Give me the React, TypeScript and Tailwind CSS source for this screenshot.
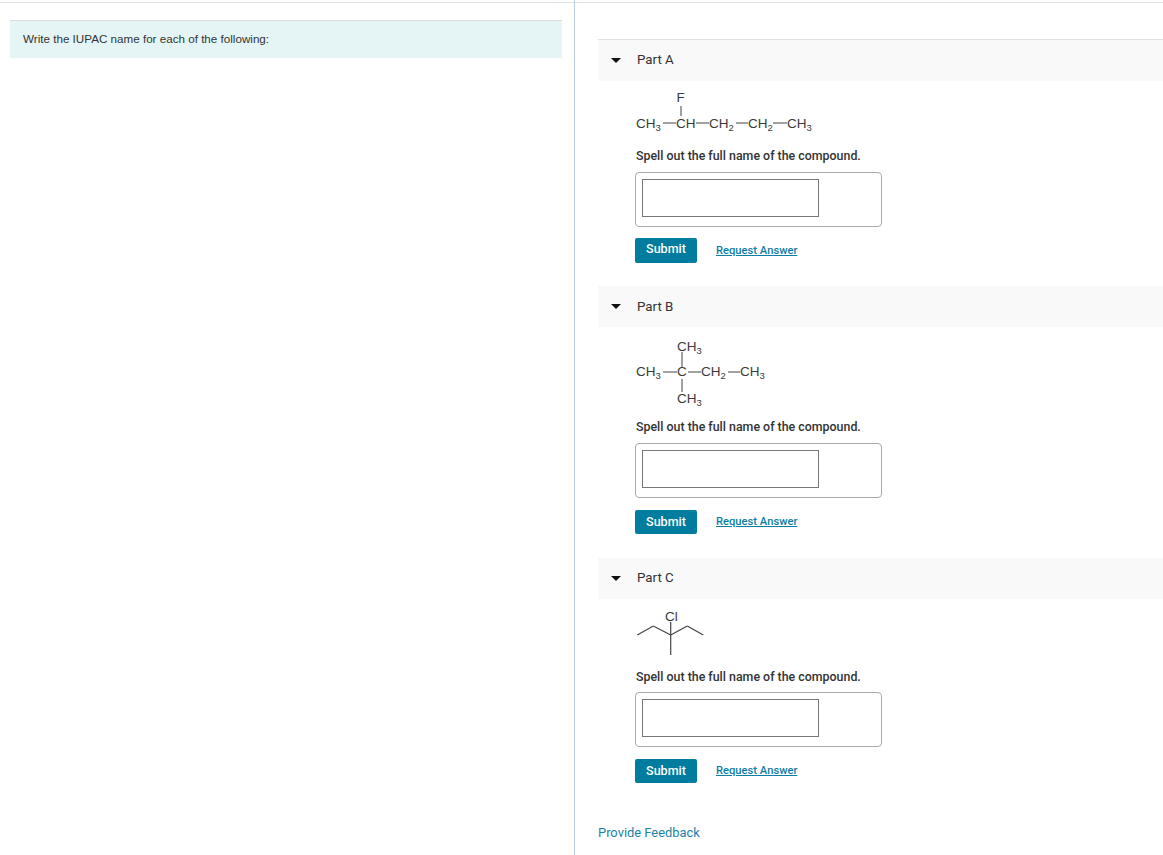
type Atom = { x: number; y: number; label: string; sub?: string }

const textFill = '#3a3a3a'

function Formula({ atoms, bonds, viewBox, className, bondWidth = 1 }: { atoms: Atom[]; bonds: number[][]; viewBox: string; className: string; bondWidth?: number }) {
  return (
    <svg viewBox={viewBox} className={className} fill={textFill} fontFamily="'Liberation Sans', Arial, sans-serif" fontSize="13.5">
      {bonds.map(([x1, y1, x2, y2], i) => (
        <line key={i} x1={x1} y1={y1} x2={x2} y2={y2} stroke="#444" strokeWidth={bondWidth} />
      ))}
      {atoms.map((a, i) => (
        <text key={i} x={a.x} y={a.y}>
          {a.label}
          {a.sub && (
            <tspan fontSize="9.5" dy="3">
              {a.sub}
            </tspan>
          )}
        </text>
      ))}
    </svg>
  )
}

function PartA() {
  return (
    <Formula
      viewBox="635 81 260 65"
      className="block h-[65px] w-[260px]"
      bonds={[
        [681, 106, 681, 116],
        [663, 123, 676, 123],
        [696, 123, 709, 123],
        [736, 123, 748, 123],
        [773, 123, 787, 123],
      ]}
      atoms={[
        { x: 676.5, y: 102, label: 'F' },
        { x: 636, y: 128, label: 'CH', sub: '3' },
        { x: 676, y: 128, label: 'CH' },
        { x: 709, y: 128, label: 'CH', sub: '2' },
        { x: 748, y: 128, label: 'CH', sub: '2' },
        { x: 787, y: 128, label: 'CH', sub: '3' },
      ]}
    />
  )
}

function PartB() {
  return (
    <Formula
      viewBox="635 327 260 90"
      className="block h-[90px] w-[260px]"
      bonds={[
        [682, 352, 682, 367],
        [682, 379, 682, 392],
        [663, 372, 677, 372],
        [688, 372, 701, 372],
        [728, 372, 740, 372],
      ]}
      atoms={[
        { x: 677, y: 351, label: 'CH', sub: '3' },
        { x: 636, y: 376, label: 'CH', sub: '3' },
        { x: 677, y: 376, label: 'C' },
        { x: 701, y: 376, label: 'CH', sub: '2' },
        { x: 740, y: 376, label: 'CH', sub: '3' },
        { x: 677, y: 403, label: 'CH', sub: '3' },
      ]}
    />
  )
}

function PartC() {
  return (
    <Formula
      viewBox="635 599 260 68"
      className="block h-[68px] w-[260px]"
      bondWidth={1.2}
      bonds={[
        [637.3, 635, 653.3, 626],
        [653.3, 626, 670.7, 635],
        [670.7, 635, 687.3, 626],
        [687.3, 626, 703.3, 635],
        [670.7, 622, 670.7, 655],
      ]}
      atoms={[{ x: 665, y: 621, label: 'Cl' }]}
    />
  )
}

function Part({ title, children, boxGap, submitGap, headerClass, titleClass, submitClass, linkClass, bottom }: {
  title: string
  children: React.ReactNode
  boxGap: string
  submitGap: string
  headerClass: string
  titleClass: string
  submitClass: string
  linkClass: string
  bottom: string
}) {
  return (
    <section className={bottom}>
      <div className={`flex items-center bg-[#f9f9f9] pl-[13px] ${headerClass}`}>
        <svg viewBox="0 0 10 5" className="h-[5px] w-[10px]">
          <path d="M0 0H10L5 5Z" fill="#111" />
        </svg>
        <span className={`ml-[16px] text-[13.3px] text-[#333] ${titleClass}`}>{title}</span>
      </div>
      <div className="pl-[37px]">
        {children}
        <p className="h-[20px] pl-[1px] text-[12.4px] leading-[20px] font-medium text-[#333]">Spell out the full name of the compound.</p>
        <div className={`h-[55px] w-[247px] rounded-[4px] border border-[#aaa] pt-[6px] pl-[6px] ${boxGap}`}>
          <div className="h-[38px] w-[177px] border border-[#777] bg-white" />
        </div>
        <div className={`flex items-center ${submitGap}`}>
          <button className={`w-[62px] rounded-[2px] bg-[#007c9e] text-[12.5px] font-medium text-white ${submitClass}`}>Submit</button>
          <a className={`ml-[19px] text-[11.2px] font-medium text-[#0d7ea3] underline ${linkClass}`}>Request Answer</a>
        </div>
      </div>
    </section>
  )
}

export default function App() {
  return (
    <div className="flex h-[855px] overflow-hidden bg-white font-['Roboto',sans-serif]">
      {/* left column */}
      <div className="w-[575px] shrink-0 border-r border-[#b9cfe0] pt-[2px]">
        <div className="h-full border-t border-[#dfe3e6] pt-[17px] pl-[10px]">
          <div className="h-[38px] w-[552px] border-t border-[#d9dfe1] bg-[#e5f5f6] pl-[13px] font-['Liberation_Sans',Arial,sans-serif] text-[11.65px] leading-[36px] text-[#333]">
            Write the IUPAC name for each of the following:
          </div>
        </div>
      </div>
      {/* right column */}
      <div className="min-w-0 flex-1 pt-[2px]">
        <div className="h-full border-t border-[#dfe3e6] pt-[36px] pl-[23px]">
          <Part title="Part A" headerClass="h-[42px] border-t border-[#e0e0e0]" titleClass="mb-[2px]" boxGap="mt-[6px]" submitGap="mt-[11px]" submitClass="h-[25px] pb-[2px]" linkClass="mt-[2px]" bottom="pb-[23px]">
            <PartA />
          </Part>
          <Part title="Part B" headerClass="h-[41px]" titleClass="" boxGap="mt-[6px]" submitGap="mt-[12px]" submitClass="h-[24px]" linkClass="" bottom="pb-[24px]">
            <PartB />
          </Part>
          <Part title="Part C" headerClass="h-[41px]" titleClass="mb-[2px]" boxGap="mt-[5px]" submitGap="mt-[12px]" submitClass="h-[24px]" linkClass="" bottom="pb-[37px]">
            <PartC />
          </Part>
          <a className="text-[12.9px] leading-[20px] text-[#1b84a8]">Provide Feedback</a>
        </div>
      </div>
    </div>
  )
}
